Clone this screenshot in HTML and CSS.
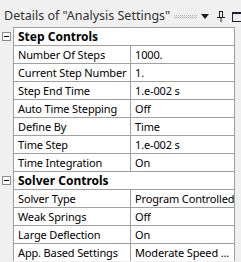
FILE: index.html
```html
<!DOCTYPE html>
<html lang="en">
<head>
    <meta charset="UTF-8">
    <title>Details of "Analysis Settings"</title>
    <link rel="stylesheet" href="styles.css">
</head>
<body>
    <div class="panel">
        <div class="titlebar">
            <span class="title">Details of "Analysis Settings"</span>
            <svg class="icon grip" width="23" height="4" viewBox="0 0 23 4">
                <defs>
                    <pattern id="dots" width="2" height="2" patternUnits="userSpaceOnUse">
                        <rect x="0" y="0" width="1" height="1" fill="#b4b4b4"/>
                        <rect x="1" y="1" width="1" height="1" fill="#d2d2d2"/>
                    </pattern>
                </defs>
                <rect width="23" height="4" fill="url(#dots)"/>
            </svg>
            <svg class="icon drop" width="8" height="5" viewBox="0 0 8 5">
                <path d="M0 0h8l-4 5z" fill="#1e1e1e"/>
            </svg>
            <svg class="icon pin" width="8" height="11" viewBox="0 0 8 11">
                <path d="M2 0.5h4M2.5 0.5v6M5.5 0.5v6M0 6.5h8M4 6.5v4.5" stroke="#1e1e1e" stroke-width="1" fill="none"/>
            </svg>
            <svg class="icon square" width="11" height="10" viewBox="0 0 11 10">
                <rect x="0.5" y="0.5" width="10" height="9" stroke="#1b2236" stroke-width="1" fill="none"/>
                <path d="M0.5 1.5h10" stroke="#1b2236" stroke-width="1"/>
            </svg>
            <svg class="icon close" width="8" height="9" viewBox="0 0 8 9">
                <path d="M0.5 0.5l7 8M7.5 0.5l-7 8" stroke="#1e1e1e" stroke-width="1.6"/>
            </svg>
        </div>
        <div class="body">
            <div class="grid" id="grid"></div>
            <div class="strip"></div>
        </div>
    </div>

    <script>
        const sections = [
            {
                title: 'Step Controls',
                rows: [
                    ['Number Of Steps', '1000.'],
                    ['Current Step Number', '1.'],
                    ['Step End Time', '1.e-002 s'],
                    ['Auto Time Stepping', 'Off'],
                    ['Define By', 'Time'],
                    ['Time Step', '1.e-002 s'],
                    ['Time Integration', 'On']
                ]
            },
            {
                title: 'Solver Controls',
                rows: [
                    ['Solver Type', 'Program Controlled'],
                    ['Weak Springs', 'Off'],
                    ['Large Deflection', 'On'],
                    ['App. Based Settings', 'Moderate Speed ...']
                ]
            }
        ];

        document.getElementById('grid').innerHTML = sections.map(section => `
            <div class="row header">
                <div class="gutter"><span class="toggle"></span></div>
                <div class="cell head">${section.title}</div>
            </div>
            ${section.rows.map(([name, value]) => `
                <div class="row">
                    <div class="gutter"></div>
                    <div class="cell name">${name}</div>
                    <div class="cell value">${value}</div>
                </div>
            `).join('')}
        `).join('');
    </script>
</body>
</html>
```

FILE: styles.css
```css
* {
    margin: 0;
    padding: 0;
    box-sizing: border-box;
}

body {
    font-family: "Noto Sans", "Open Sans", sans-serif;
    font-size: 11px;
    color: #000;
    background-color: #f0f0f0;
    width: 241px;
    height: 262px;
    overflow: hidden;
}

.titlebar {
    height: 27px;
    display: flex;
    align-items: center;
    padding-left: 4px;
    white-space: nowrap;
    overflow: hidden;
}

.title {
    color: #333;
    font-size: 12.5px;
    flex-shrink: 0;
    margin-top: 4px;
}

.icon {
    flex-shrink: 0;
    display: block;
    margin-top: 6px;
}

.grip {
    margin-left: 4px;
}

.drop {
    margin-left: 4px;
}

.pin {
    margin-left: 8px;
}

.square {
    margin-left: 7px;
}

.close {
    margin-left: 8px;
}

.body {
    display: flex;
}

.grid {
    width: 235px;
}

.strip {
    flex: 1;
}

.row {
    display: grid;
    grid-template-columns: 13px 117px 1fr;
    height: 18px;
}

.gutter {
    display: flex;
    align-items: center;
    justify-content: center;
}

.toggle {
    width: 9px;
    height: 9px;
    border: 1px solid #8c8c8c;
    background-color: #fff;
    position: relative;
}

.toggle::after {
    content: "";
    position: absolute;
    left: 1px;
    right: 1px;
    top: 3px;
    height: 1px;
    background-color: #000;
}

.cell {
    background-color: #fff;
    border-top: 1px solid #a0a0a0;
    border-left: 1px solid #a0a0a0;
    padding-left: 4px;
    line-height: 17px;
    letter-spacing: -0.15px;
    white-space: nowrap;
    overflow: hidden;
}

.value {
    border-right: 1px solid #a0a0a0;
}

.head {
    grid-column: 2 / 4;
    font-size: 12px;
    font-weight: bold;
    letter-spacing: 0;
    border-right: 1px solid #a0a0a0;
}
```
